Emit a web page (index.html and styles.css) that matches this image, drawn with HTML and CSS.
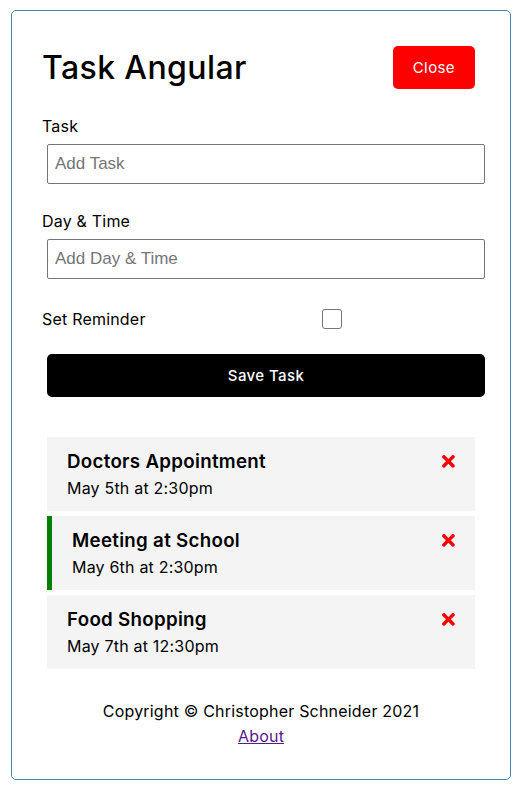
FILE: index.html
```html
<!DOCTYPE html>
<html lang="en">
<head>
<meta charset="utf-8">
<title>Task Angular</title>
<link rel="stylesheet" href="styles.css">
</head>
<body>
<div class="container">
  <header class="header">
    <h1 class="title">Task Angular</h1>
    <button class="btn btn-close" type="button">Close</button>
  </header>
  <form class="add-form">
    <div class="form-control">
      <label class="label">Task</label>
      <input class="text-input" type="text" placeholder="Add Task">
    </div>
    <div class="form-control">
      <label class="label">Day &amp; Time</label>
      <input class="text-input" type="text" placeholder="Add Day &amp; Time">
    </div>
    <div class="form-control-check">
      <label class="label check-label">Set Reminder</label>
      <input class="check" type="checkbox">
    </div>
    <input class="btn btn-block" type="submit" value="Save Task">
  </form>
  <div class="tasks">
    <div class="task">
      <h3 class="task-title">Doctors Appointment
        <svg class="times" viewBox="0 0 352 512" aria-hidden="true"><path fill="#ff0000" d="M242.72 256l100.07-100.07c12.28-12.28 12.28-32.19 0-44.48l-22.24-22.24c-12.28-12.28-32.19-12.28-44.48 0L176 189.28 75.93 89.21c-12.28-12.28-32.19-12.28-44.48 0L9.21 111.45c-12.28 12.28-12.28 32.19 0 44.48L109.28 256 9.21 356.07c-12.28 12.28-12.28 32.19 0 44.48l22.24 22.24c12.28 12.28 32.2 12.28 44.48 0L176 322.72l100.07 100.07c12.28 12.28 32.2 12.28 44.48 0l22.24-22.24c12.28-12.28 12.28-32.19 0-44.48L242.72 256z"/></svg>
      </h3>
      <p class="task-day">May 5th at 2:30pm</p>
    </div>
    <div class="task reminder">
      <h3 class="task-title">Meeting at School
        <svg class="times" viewBox="0 0 352 512" aria-hidden="true"><path fill="#ff0000" d="M242.72 256l100.07-100.07c12.28-12.28 12.28-32.19 0-44.48l-22.24-22.24c-12.28-12.28-32.19-12.28-44.48 0L176 189.28 75.93 89.21c-12.28-12.28-32.19-12.28-44.48 0L9.21 111.45c-12.28 12.28-12.28 32.19 0 44.48L109.28 256 9.21 356.07c-12.28 12.28-12.28 32.19 0 44.48l22.24 22.24c12.28 12.28 32.2 12.28 44.48 0L176 322.72l100.07 100.07c12.28 12.28 32.2 12.28 44.48 0l22.24-22.24c12.28-12.28 12.28-32.19 0-44.48L242.72 256z"/></svg>
      </h3>
      <p class="task-day">May 6th at 2:30pm</p>
    </div>
    <div class="task">
      <h3 class="task-title">Food Shopping
        <svg class="times" viewBox="0 0 352 512" aria-hidden="true"><path fill="#ff0000" d="M242.72 256l100.07-100.07c12.28-12.28 12.28-32.19 0-44.48l-22.24-22.24c-12.28-12.28-32.19-12.28-44.48 0L176 189.28 75.93 89.21c-12.28-12.28-32.19-12.28-44.48 0L9.21 111.45c-12.28 12.28-12.28 32.19 0 44.48L109.28 256 9.21 356.07c-12.28 12.28-12.28 32.19 0 44.48l22.24 22.24c12.28 12.28 32.2 12.28 44.48 0L176 322.72l100.07 100.07c12.28 12.28 32.2 12.28 44.48 0l22.24-22.24c12.28-12.28 12.28-32.19 0-44.48L242.72 256z"/></svg>
      </h3>
      <p class="task-day">May 7th at 12:30pm</p>
    </div>
  </div>
  <footer class="footer">
    <p class="copyright">Copyright &copy; Christopher Schneider 2021</p>
    <a class="about" href="#">About</a>
  </footer>
</div>
</body>
</html>
```

FILE: styles.css
```css
* {
  box-sizing: border-box;
  margin: 0;
  padding: 0;
}

body {
  font-family: Inter, "Open Sans", sans-serif;
  font-size: 16px;
  line-height: 25px;
  letter-spacing: 0.2px;
  color: #000;
  background: #fff;
}

.container {
  width: 500px;
  margin: 10px 0 0 11px;
  padding: 30px;
  border: 1px solid steelblue;
  border-radius: 5px;
}

.header {
  display: flex;
  justify-content: space-between;
  align-items: center;
  height: 53px;
  margin-bottom: 20px;
}

.title {
  font-size: 32px;
  line-height: 48px;
  font-weight: 500;
  letter-spacing: 0.4px;
}

.btn {
  display: inline-block;
  border: none;
  border-radius: 5px;
  padding: 10px 20px;
  font-family: Inter, "Open Sans", sans-serif;
  font-size: 15px;
  line-height: 23px;
  letter-spacing: 0.4px;
  color: #fff;
  cursor: pointer;
}

.btn-close {
  background: #ff0000;
  margin: 5px;
}

.btn-block {
  display: block;
  width: 438px;
  height: 43px;
  margin-left: 5px;
  background: #000;
  font-weight: 500;
}

.add-form {
  margin-bottom: 40px;
}

.form-control {
  display: flex;
  flex-direction: column;
  margin-bottom: 20px;
}

.label {
  display: block;
  line-height: 25px;
}

.text-input {
  display: block;
  width: 438px;
  height: 40px;
  margin: 5px 0 5px 5px;
  padding: 3px 7px;
  border: 1px solid #767676;
  border-radius: 2px;
  font-family: "Liberation Sans", Arial, sans-serif;
  font-size: 17px;
  letter-spacing: 0;
  color: #000;
}

.text-input::placeholder {
  color: #757575;
}

.form-control-check {
  display: flex;
  align-items: center;
  height: 30px;
  margin-bottom: 20px;
}

.check-label {
  flex: 0 0 280px;
}

.check {
  appearance: none;
  -webkit-appearance: none;
  width: 20px;
  height: 20px;
  border: 1px solid #767676;
  border-radius: 3px;
  background: #fff;
}

.task {
  background: #f4f4f4;
  margin: 0 5px 5px;
  padding: 10px 20px;
  height: 74px;
  cursor: pointer;
}

.task:last-child {
  margin-bottom: 0;
}

.task.reminder {
  border-left: 5px solid green;
}

.task-title {
  display: flex;
  justify-content: space-between;
  align-items: center;
  font-size: 18.72px;
  line-height: 29px;
  font-weight: 600;
  letter-spacing: 0.3px;
}

.times {
  width: 12.87px;
  height: 18.72px;
  flex: none;
}

.task-day {
  line-height: 25px;
}

.footer {
  margin-top: 30px;
  text-align: center;
}

.about {
  color: #551a8b;
  text-decoration: underline;
}
```
